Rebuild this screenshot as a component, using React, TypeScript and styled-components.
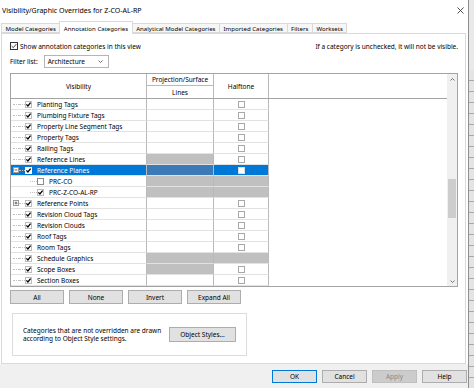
import React from 'react';
import styled, { createGlobalStyle } from 'styled-components';

const Global = createGlobalStyle`
  html, body { margin: 0; padding: 0; }
  body {
    width: 474px; height: 388px; overflow: hidden; background: #fff;
    font-family: 'Noto Sans', 'DejaVu Sans', sans-serif; font-size: 6.5px; color: #000;
  }
  #root { width: 474px; height: 388px; }
`;

const Screen = styled.div`
  display: flex; width: 474px; height: 388px;
`;

const Dialog = styled.div`
  width: 469px; height: 388px; box-sizing: border-box;
  display: flex; flex-direction: column;
  border-right: 1px solid #8e8e8e; border-bottom: 1px solid #9a9a9a;
  background: #fff;
`;

const Strip = styled.div`
  flex: 1;
  background:
    repeating-linear-gradient(to bottom, #e4e4e4 0, #e4e4e4 10px, #a9a9a9 10px, #a9a9a9 11px) 0 70px / 100% 100% no-repeat,
    #e9e9e9;
`;

const TitleBar = styled.div`
  height: 21px; flex: none; display: flex; align-items: center; justify-content: space-between;
  padding: 0 4px 0 2px; font-size: 7px;
`;

const CloseIcon = () => (
  <svg width="7" height="7" viewBox="0 0 7 7">
    <path d="M0.5 0.5 L6.5 6.5 M6.5 0.5 L0.5 6.5" stroke="#222" strokeWidth="0.8" />
  </svg>
);

const TabStrip = styled.div`
  height: 12px; flex: none; display: flex; align-items: flex-end; padding-left: 1px;
  position: relative; z-index: 1; font-size: 6.1px;
`;

const Tab = styled.div<{ $active?: boolean }>`
  box-sizing: border-box;
  height: ${(p) => (p.$active ? '13px' : '10px')};
  margin-bottom: ${(p) => (p.$active ? '-1px' : '0')};
  padding: 0 3.5px; display: flex; align-items: center; white-space: nowrap;
  border: 1px solid #d9d9d9; border-bottom: ${(p) => (p.$active ? 'none' : '1px solid #d9d9d9')};
  margin-right: -1px;
  background: ${(p) => (p.$active ? '#fff' : '#f6f6f6')};
`;

const Panel = styled.div`
  flex: 1; display: flex; flex-direction: column;
  margin: 0 2px 0 1px; border: 1px solid #d9d9d9; background: #fff;
  padding: 7px 7px 7px 8px;
`;

const TopRow = styled.div`
  height: 10px; display: flex; align-items: center; justify-content: space-between;
`;

const CheckLabel = styled.label`
  display: flex; align-items: center; gap: 2px;
`;

const FilterRow = styled.div`
  margin-top: 4px; height: 13px; display: flex; align-items: center; gap: 6px; padding-left: 0;
`;

const Select = styled.div`
  width: 65px; height: 13px; box-sizing: border-box; border: 1px solid #b5b5b5;
  display: flex; align-items: center; justify-content: space-between; padding: 0 5px 0 3px;
`;

const Table = styled.div`
  margin-top: 5px; height: 214px; box-sizing: border-box;
  border: 1px solid #a3a3a3; display: flex;
`;

const Grid = styled.div`
  flex: 1; display: flex; flex-direction: column;
`;

const cols = '136px 67px 55px 1fr';

const Header = styled.div`
  display: grid; grid-template-columns: ${cols}; grid-template-rows: 12px 12px;
  border-bottom: 1px solid #a3a3a3;
`;

const HeadCell = styled.div<{ $col: number; $row: string; $sub?: boolean; $edge?: boolean }>`
  grid-column: ${(p) => p.$col};
  grid-row: ${(p) => p.$row};
  display: flex; align-items: center; justify-content: center;
  border-right: ${(p) => (p.$edge ? 'none' : '1px solid #b9b9b9')};
  border-bottom: ${(p) => (p.$sub ? '1px solid #b9b9b9' : 'none')};
  box-sizing: border-box;
`;

const Row = styled.div`
  display: grid; grid-template-columns: ${cols}; height: 11px;
`;

const Cell = styled.div<{ $fill?: string }>`
  box-sizing: border-box; border-right: 1px solid #b9b9b9; border-bottom: 1px solid #e2e2e2;
  background: ${(p) => p.$fill || 'transparent'};
  display: flex; align-items: center; justify-content: center;
`;

const VisCell = styled.div<{ $selected?: boolean; $child?: boolean }>`
  box-sizing: border-box; border-right: 1px solid #b9b9b9; border-bottom: 1px solid #e2e2e2;
  background: ${(p) => (p.$selected ? '#0078d7' : 'transparent')};
  color: ${(p) => (p.$selected ? '#fff' : '#000')};
  display: flex; align-items: center;
  padding-left: ${(p) => (p.$child ? '19px' : '2px')};
  white-space: nowrap;
`;

const EmptyCell = styled.div``;

const Slot = styled.div`
  width: 6px; height: 6px; flex: none; display: flex; align-items: center;
`;

const Dots = styled.div<{ $w: number }>`
  width: ${(p) => p.$w}px; height: 0; flex: none; border-top: 1px dotted #c2c2c2;
`;

const Label = styled.span`
  margin-left: 5px;
`;

const Scroll = styled.div`
  width: 10px; flex: none; background: #f0f0f0; display: flex; flex-direction: column; align-items: center;
`;

const ArrowBox = styled.div`
  height: 10px; width: 10px; display: flex; align-items: center; justify-content: center; flex: none;
`;

const Thumb = styled.div`
  margin-top: 95px; width: 8px; height: 39px; background: #cdcdcd; flex: none;
`;

const Spacer = styled.div`
  flex: 1;
`;

const ButtonRow = styled.div`
  margin-top: 3px; display: flex; gap: 5px; margin-left: 0;
`;

const Button = styled.button<{ $w?: number; $h?: number; $primary?: boolean; $disabled?: boolean }>`
  font-family: inherit; font-size: 6.5px; padding: 0; margin: 0;
  width: ${(p) => p.$w || 54}px; height: ${(p) => p.$h || 14}px;
  background: ${(p) => (p.$disabled ? '#cccccc' : '#e1e1e1')};
  color: ${(p) => (p.$disabled ? '#8a8a8a' : '#000')};
  border: 1px solid ${(p) => (p.$primary ? '#0078d7' : p.$disabled ? '#bfbfbf' : '#adadad')};
  box-sizing: border-box;
`;

const GroupBox = styled.div`
  margin-top: 9px; margin-left: 2px; width: 235px; height: 43px; box-sizing: border-box;
  border: 1px solid #dcdcdc; display: flex; align-items: center; justify-content: space-between;
  padding: 0 10px 0 10px;
`;

const Note = styled.div`
  line-height: 8px;
`;

const Footer = styled.div`
  height: 24px; flex: none; background: #f0f0f0; display: flex; justify-content: flex-end;
  align-items: flex-start; padding: 6px 1px 0 0; gap: 5px; box-sizing: border-box;
`;

const Check = ({ checked = true, selected = false }: { checked?: boolean; selected?: boolean }) => (
  <svg width="7" height="7" viewBox="0 0 7 7" style={{ flex: 'none' }}>
    <rect x="0.5" y="0.5" width="6" height="6" fill="#fff" stroke={selected ? '#fff' : checked ? '#bdbdbd' : '#8a8a8a'} />
    {checked && <path d="M1.4 3.4 L2.9 5 L5.6 1.6" fill="none" stroke="#000" strokeWidth="1.3" />}
  </svg>
);

const BigCheck = () => (
  <svg width="8" height="8" viewBox="0 0 8 8" style={{ flex: 'none' }}>
    <rect x="0.5" y="0.5" width="7" height="7" fill="#fff" stroke="#333" />
    <path d="M1.6 4 L3.3 5.7 L6.4 2" fill="none" stroke="#333" strokeWidth="0.9" />
  </svg>
);

const Box = ({ selected = false }: { selected?: boolean }) => (
  <svg width="7" height="7" viewBox="0 0 7 7">
    <rect x="0.5" y="0.5" width="6" height="6" fill="#fff" stroke={selected ? '#dcdcdc' : '#a8a8a8'} />
  </svg>
);

const Expander = ({ open }: { open: boolean }) => (
  <svg width="6" height="6" viewBox="0 0 6 6">
    <rect x="0.5" y="0.5" width="5" height="5" fill="#fff" stroke="#9a9a9a" />
    <path d={open ? 'M1.5 3 H4.5' : 'M1.5 3 H4.5 M3 1.5 V4.5'} stroke="#444" strokeWidth="0.8" />
  </svg>
);

const Chevron = ({ up }: { up?: boolean }) => (
  <svg width="5" height="3" viewBox="0 0 5 3">
    <path d={up ? 'M0.5 2.5 L2.5 0.5 L4.5 2.5' : 'M0.5 0.5 L2.5 2.5 L4.5 0.5'} fill="none" stroke="#555" strokeWidth="0.8" />
  </svg>
);

type RowData = {
  label: string;
  checked?: boolean;
  child?: boolean;
  selected?: boolean;
  expander?: 'open' | 'closed';
  projGray?: boolean;
  halfGray?: boolean;
};

const rows: RowData[] = [
  { label: 'Planting Tags' },
  { label: 'Plumbing Fixture Tags' },
  { label: 'Property Line Segment Tags' },
  { label: 'Property Tags' },
  { label: 'Railing Tags' },
  { label: 'Reference Lines', projGray: true },
  { label: 'Reference Planes', selected: true, expander: 'open' },
  { label: 'PRC-CO', child: true, checked: false, projGray: true, halfGray: true },
  { label: 'PRC-Z-CO-AL-RP', child: true, projGray: true, halfGray: true },
  { label: 'Reference Points', expander: 'closed' },
  { label: 'Revision Cloud Tags' },
  { label: 'Revision Clouds' },
  { label: 'Roof Tags' },
  { label: 'Room Tags' },
  { label: 'Schedule Graphics', projGray: true, halfGray: true },
  { label: 'Scope Boxes', projGray: true },
  { label: 'Section Boxes' },
];

const tabs = [
  'Model Categories',
  'Annotation Categories',
  'Analytical Model Categories',
  'Imported Categories',
  'Filters',
  'Worksets',
];

export default function App() {
  return (
    <>
      <Global />
      <Screen>
        <Dialog>
          <TitleBar>
            <span>Visibility/Graphic Overrides for Z-CO-AL-RP</span>
            <CloseIcon />
          </TitleBar>
          <TabStrip>
            {tabs.map((t) => (
              <Tab key={t} $active={t === 'Annotation Categories'}>{t}</Tab>
            ))}
          </TabStrip>
          <Panel>
            <TopRow>
              <CheckLabel>
                <BigCheck />
                <span>Show annotation categories in this view</span>
              </CheckLabel>
              <span>If a category is unchecked, it will not be visible.</span>
            </TopRow>
            <FilterRow>
              <span>Filter list:</span>
              <Select>
                <span>Architecture</span>
                <Chevron />
              </Select>
            </FilterRow>
            <Table>
              <Grid>
                <Header>
                  <HeadCell $col={1} $row="1 / 3">Visibility</HeadCell>
                  <HeadCell $col={2} $row="1" $sub>Projection/Surface</HeadCell>
                  <HeadCell $col={2} $row="2">Lines</HeadCell>
                  <HeadCell $col={3} $row="1 / 3">Halftone</HeadCell>
                  <HeadCell $col={4} $row="1 / 3" $edge />
                </Header>
                {rows.map((r) => {
                  const sel = !!r.selected;
                  const projFill = sel ? '#3b7ab6' : r.projGray ? '#c0c0c0' : undefined;
                  const halfFill = sel ? '#0078d7' : r.halfGray ? '#c0c0c0' : undefined;
                  return (
                    <Row key={r.label}>
                      <VisCell $selected={sel} $child={r.child}>
                        {!r.child && (
                          <Slot>
                            {r.expander ? <Expander open={r.expander === 'open'} /> : <Dots $w={6} />}
                          </Slot>
                        )}
                        <Dots $w={r.child ? 7 : 6} />
                        <Check checked={r.checked !== false} selected={sel} />
                        <Label>{r.label}</Label>
                      </VisCell>
                      <Cell $fill={projFill} />
                      <Cell $fill={halfFill}>{!r.halfGray && <Box selected={sel} />}</Cell>
                      <EmptyCell />
                    </Row>
                  );
                })}
              </Grid>
              <Scroll>
                <ArrowBox><Chevron up /></ArrowBox>
                <Thumb />
                <Spacer />
                <ArrowBox><Chevron /></ArrowBox>
              </Scroll>
            </Table>
            <ButtonRow>
              <Button>All</Button>
              <Button>None</Button>
              <Button>Invert</Button>
              <Button>Expand All</Button>
            </ButtonRow>
            <GroupBox>
              <Note>
                Categories that are not overridden are drawn
                <br />
                according to Object Style settings.
              </Note>
              <Button $w={67} $h={15}>Object Styles...</Button>
            </GroupBox>
          </Panel>
          <Footer>
            <Button $w={45} $h={13} $primary>OK</Button>
            <Button $w={45} $h={13}>Cancel</Button>
            <Button $w={45} $h={13} $disabled>Apply</Button>
            <Button $w={45} $h={13}>Help</Button>
          </Footer>
        </Dialog>
        <Strip />
      </Screen>
    </>
  );
}
